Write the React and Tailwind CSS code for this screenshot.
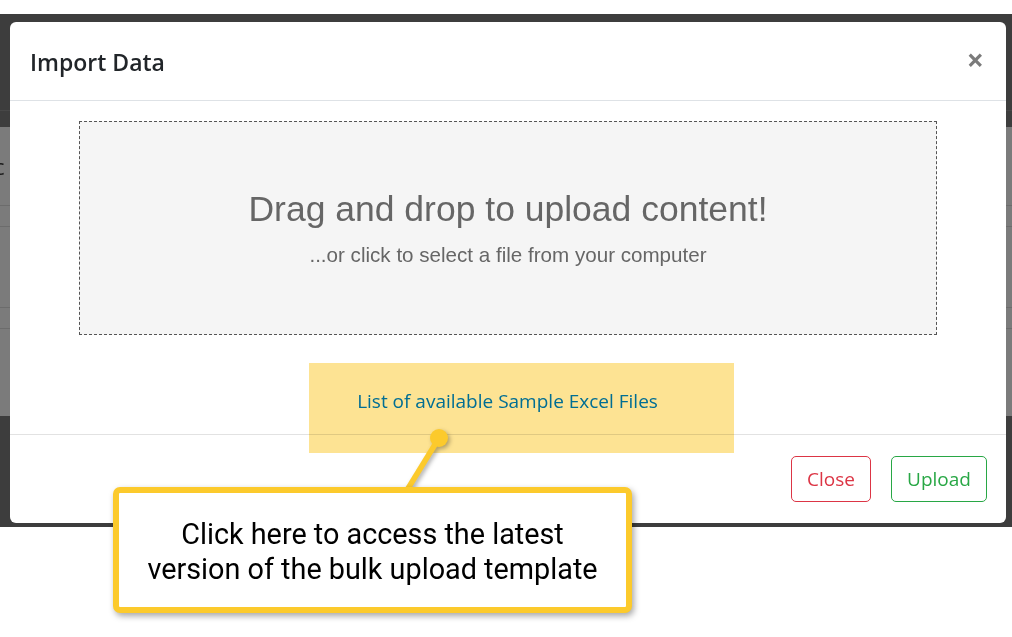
import React from "react";

export default function App() {
  const seg = { fontFamily: '"Open Sans", "Noto Sans", sans-serif' };
  return (
    <div className="relative w-[1012px] h-[637px] overflow-hidden bg-white">
      {/* underlying page behind the dark overlay */}
      <div className="flex flex-col">
        <div className="h-[14px] bg-white" />
        <div className="h-[513px] bg-[#3d3d3d] flex flex-col">
          <div className="h-[97px] border-b border-[#474747]" />
          <div className="h-[16px]" />
          <div className="h-[289px] bg-[#7b7b7b] flex flex-col">
            <div className="h-[78px] flex items-center">
              <span className="text-[22px] text-[#1a1a1a] -ml-[6px]" style={seg}>
                c
              </span>
            </div>
            <div className="h-[22px] border-y border-[#6c6c6c]" />
            <div className="h-[80px]" />
            <div className="h-[22px] border-y border-[#6c6c6c]" />
          </div>
        </div>
        <div className="h-[110px] bg-white" />
      </div>

      {/* modal */}
      <div
        className="absolute left-[10px] top-[22px] w-[996px] h-[501px] bg-white rounded-[6px] flex flex-col"
        style={seg}
      >
        <div className="h-[79px] shrink-0 border-b border-[#dee2e6] flex items-center justify-between pl-[20px] pr-[22px]">
          <span className="text-[23px] font-semibold text-[#212529] leading-none mt-[2px]">Import Data</span>
          <span className="text-[30px] font-bold text-[#7b7b7b] leading-none -mt-[2px]">×</span>
        </div>
        <div className="h-[334px] shrink-0 border-b border-[#e2e2e2] flex flex-col items-center pt-[20px]">
          <div className="w-[858px] h-[214px] border border-dashed border-[#555] bg-[#f5f5f5] flex flex-col items-center justify-center pt-[2px]">
            <div
              className="text-[35.5px] text-[#666] leading-none"
              style={{ fontFamily: '"Liberation Sans", Arial, sans-serif' }}
            >
              Drag and drop to upload content!
            </div>
            <div
              className="text-[20.6px] text-[#666] mt-[17px] leading-none"
              style={{ fontFamily: '"Liberation Sans", Arial, sans-serif' }}
            >
              ...or click to select a file from your computer
            </div>
          </div>
          <div className="w-full flex justify-center mt-[57px] pr-[1px]">
            <span className="text-[19px] text-[#007bff] leading-none">List of available Sample Excel Files</span>
          </div>
        </div>
        <div className="flex-1 flex items-start justify-end gap-[20px] pt-[21px] pr-[19px]">
          <button className="w-[80px] h-[46px] border border-[#dc3545] text-[#dc3545] rounded-[5px] text-[19px]">
            Close
          </button>
          <button className="w-[96px] h-[46px] border border-[#28a745] text-[#28a745] rounded-[5px] text-[19px]">
            Upload
          </button>
        </div>
      </div>

      {/* highlight */}
      <div className="absolute left-[309px] top-[363px] w-[425px] h-[90px] bg-[#fde393] mix-blend-multiply" />

      {/* connector */}
      <svg
        className="absolute left-0 top-0"
        width="1012"
        height="637"
        style={{ filter: "drop-shadow(2px 2px 2px rgba(0,0,0,0.3))" }}
      >
        <line x1="439" y1="438" x2="404" y2="495" stroke="#fcca2c" strokeWidth="5.5" />
        <circle cx="439" cy="438" r="9" fill="#fcca2c" />
      </svg>

      {/* callout */}
      <div className="absolute left-[113px] top-[487px] w-[519px] h-[126px] bg-white border-[6px] border-[#fcca2c] rounded-[7px] shadow-[2px_3px_6px_rgba(0,0,0,0.35)] flex items-center justify-center pt-[3px]">
        <div
          className="text-center text-[28.8px] leading-[35px] text-black"
          style={{ fontFamily: 'Roboto, "Noto Sans", sans-serif' }}
        >
          Click here to access the latest
          <br />
          version of the bulk upload template
        </div>
      </div>
    </div>
  );
}
